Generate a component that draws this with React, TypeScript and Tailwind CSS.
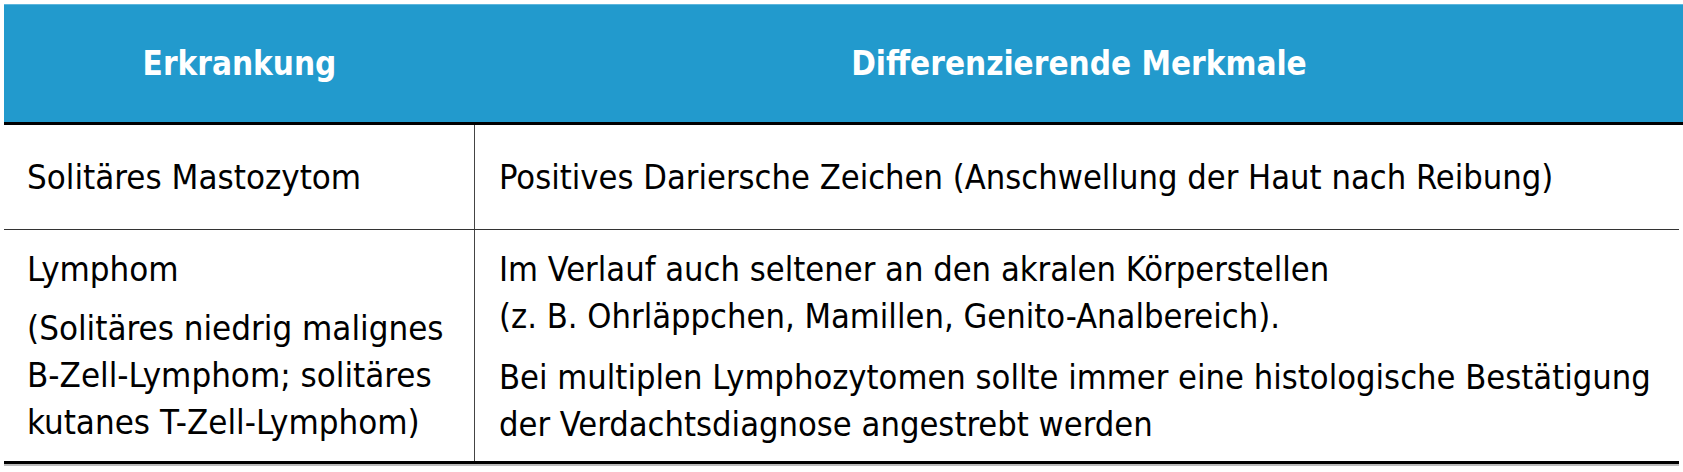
const rows = [
  {
    name: [['Solitäres Mastozytom']],
    features: [['Positives Dariersche Zeichen (Anschwellung der Haut nach Reibung)']],
  },
  {
    name: [['Lymphom'], ['(Solitäres niedrig malignes', 'B-Zell-Lymphom; solitäres', 'kutanes T-Zell-Lymphom)']],
    features: [
      ['Im Verlauf auch seltener an den akralen Körperstellen', '(z. B. Ohrläppchen, Mamillen, Genito-Analbereich).'],
      ['Bei multiplen Lymphozytomen sollte immer eine histologische Bestätigung', 'der Verdachtsdiagnose angestrebt werden'],
    ],
  },
];

const Lines = ({ lines }: { lines: string[] }) => (
  <p className="whitespace-nowrap">
    {lines.map((l, j) => (
      <span key={j} className="block">
        {l}
      </span>
    ))}
  </p>
);

const App = () => {
  return (
    <div
      className="w-[1683px] bg-white pl-1 pt-1 text-black"
      style={{ fontFamily: '"Liberation Sans Narrow", "DejaVu Sans Condensed", "Liberation Sans", sans-serif' }}
    >
      <div className="grid grid-cols-[471px_1fr] border-t border-t-[#5db6dd] border-b-[3px] border-black bg-[#229acd]">
        <div className="flex h-[117px] items-center justify-center text-[33px] font-bold text-white">Erkrankung</div>
        <div className="flex h-[117px] items-center justify-center text-[33px] font-bold text-white">Differenzierende Merkmale</div>
      </div>

      {rows.map((row, i) => {
        const last = i === rows.length - 1;
        const cell = last ? 'justify-start pt-[16px] pb-[13px]' : 'h-[104px] justify-center';
        return (
          <div
            key={i}
            className={`mr-1 grid grid-cols-[471px_1fr] ${last ? 'border-b-[3px] border-black' : 'border-b border-[#333]'}`}
          >
            <div className={`flex flex-col gap-[12px] border-r border-[#444] pl-[23px] pr-2 text-[34.6px] leading-[47px] ${cell}`}>
              {row.name.map((p, j) => (
                <Lines key={j} lines={p} />
              ))}
            </div>
            <div className={`flex flex-col gap-[14px] pl-[24px] pr-2 text-[34.2px] leading-[47px] ${cell}`}>
              {row.features.map((p, j) => (
                <Lines key={j} lines={p} />
              ))}
            </div>
          </div>
        );
      })}
      <div className="mr-1 h-[2px] bg-[#bbb]" />
    </div>
  );
};

export default App;
